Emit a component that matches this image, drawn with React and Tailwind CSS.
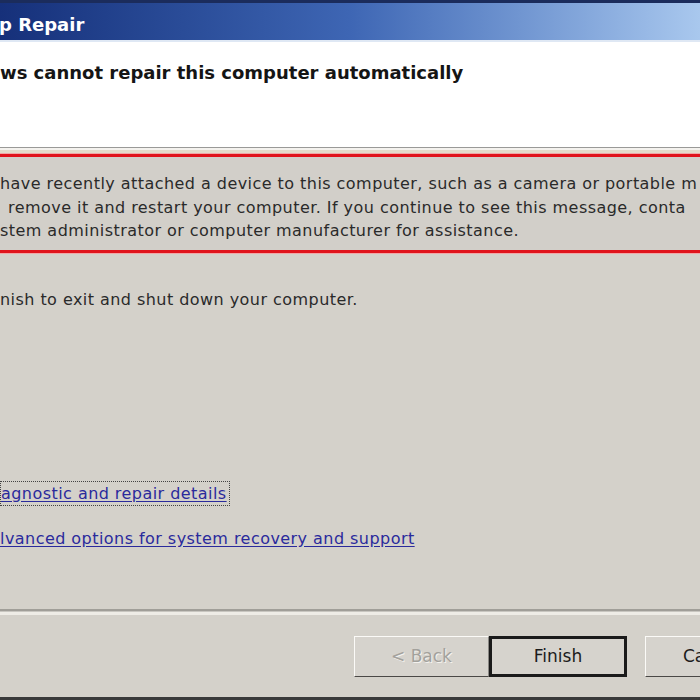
import React from "react";

export default function App() {
  const font = { fontFamily: '"DejaVu Sans", Verdana, sans-serif' };
  return (
    <div
      className="w-[700px] h-[700px] overflow-hidden bg-[#d4d1ca] flex flex-col text-[#2a2a2a]"
      style={font}
    >
      {/* top frame */}
      <div className="h-[3px] bg-[#1b2c5c] shrink-0" />
      {/* title bar */}
      <div className="h-[37px] shrink-0 flex items-center pt-[5px] bg-gradient-to-r from-[#16307a] via-[#3e66b4] to-[#a9c8ee]">
        <span className="text-white font-bold text-[18px] -ml-[1px]">p Repair</span>
      </div>
      <div className="h-[2px] bg-[#dfe8f4] shrink-0" />
      {/* white header */}
      <div className="h-[105px] shrink-0 bg-white flex flex-col">
        <div className="pt-[19px] text-[18px] font-bold text-[#151515] leading-[24px] whitespace-nowrap">
          ws cannot repair this computer automatically
        </div>
      </div>
      <div className="h-[1px] bg-[#9a9a98] shrink-0" />
      <div className="h-[2px] bg-[#f4f2ee] shrink-0" />
      <div className="h-[3px] bg-[#e4dccb] shrink-0" />
      {/* red-framed message */}
      <div className="shrink-0 border-y border-[#f0a8a8]">
        <div className="border-y-[3px] border-[#e0141c] bg-[#d2cfc9] pt-[15px] pb-[7px] text-[16px] tracking-[0.45px] leading-[23.5px] whitespace-nowrap">
          <div>have recently attached a device to this computer, such as a camera or portable m</div>
          <div className="pl-[8px]">remove it and restart your computer. If you continue to see this message, conta</div>
          <div>stem administrator or computer manufacturer for assistance.</div>
        </div>
      </div>
      <div className="pt-[34px] text-[16px] tracking-[0.45px] leading-[23px] whitespace-nowrap">
        nish to exit and shut down your computer.
      </div>
      {/* links */}
      <div className="pt-[170px] flex flex-col gap-[21px] text-[16px] tracking-[0.45px] leading-[23px] text-[#2a2a9c] whitespace-nowrap">
        <div className="self-start border border-dotted border-[#444] pr-[2px]">
          <span className="underline underline-offset-2">agnostic and repair details</span>
        </div>
        <div>
          <span className="underline underline-offset-2">lvanced options for system recovery and support</span>
        </div>
      </div>
      <div className="flex-1" />
      {/* separator */}
      <div className="h-[2px] bg-[#a09e98] shrink-0" />
      <div className="h-[1px] bg-[#c8c6c0] shrink-0" />
      <div className="h-[3px] bg-[#eeece6] shrink-0" />
      {/* buttons */}
      <div className="h-[82px] shrink-0 flex items-start pt-[21px]">
        <div className="shrink-0 ml-[354px] w-[135px] h-[41px] flex items-center justify-center border border-t-[#fbfaf7] border-l-[#fbfaf7] border-r-[#8a8884] border-b-[#4a4846] bg-[#d6d3cd] text-[17px] text-[#a3a19c] [text-shadow:1px_1px_0_#f4f2ee]">
          &lt; Back
        </div>
        <div className="shrink-0 w-[138px] h-[41px] flex items-center justify-center border-[3px] border-[#1a1a1a] bg-[#d6d3cd] text-[17px] text-[#1c1c1c]">
          Finish
        </div>
        <div className="shrink-0 ml-[18px] w-[80px] h-[41px] flex items-center pl-[37px] border border-t-[#fbfaf7] border-l-[#fbfaf7] border-b-[#4a4846] border-r-0 bg-[#d6d3cd] text-[17px] text-[#1c1c1c]">
          Cancel
        </div>
      </div>
      <div className="h-[3px] bg-[#3a3a3a] shrink-0" />
    </div>
  );
}
